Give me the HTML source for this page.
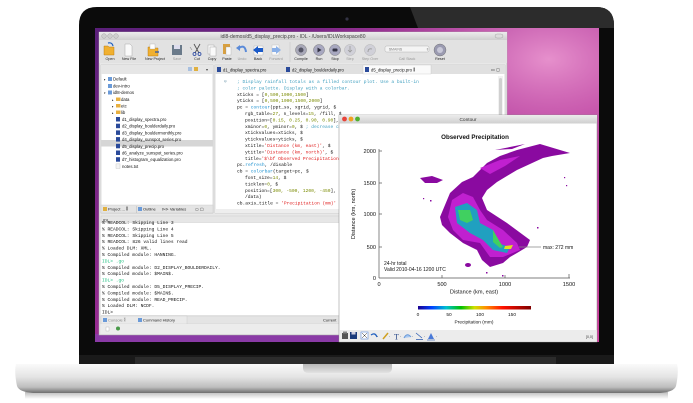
<!DOCTYPE html>
<html><head><meta charset="utf-8"><style>
html,body{margin:0;padding:0;background:#fff;width:693px;height:403px;overflow:hidden}
svg{display:block}
.s{font-family:"Liberation Sans",sans-serif}
.m{font-family:"Liberation Mono",monospace;font-size:4.6px}
</style></head><body>
<svg width="693" height="403" viewBox="0 0 693 403" xmlns="http://www.w3.org/2000/svg">
<defs>
<linearGradient id="base" x1="0" y1="0" x2="0" y2="1">
<stop offset="0" stop-color="#fafafa"/><stop offset="0.45" stop-color="#e4e4e4"/><stop offset="0.8" stop-color="#bdbdbd"/><stop offset="1" stop-color="#6e6e6e"/></linearGradient>
<linearGradient id="notch" x1="0" y1="0" x2="0" y2="1"><stop offset="0" stop-color="#b8b8b8"/><stop offset="1" stop-color="#e2e2e2"/></linearGradient>
<linearGradient id="desk" x1="0" y1="0" x2="1" y2="1"><stop offset="0" stop-color="#5a1f7a"/><stop offset="0.5" stop-color="#9a2c92"/><stop offset="1" stop-color="#d0409e"/></linearGradient>
<radialGradient id="glow" cx="0.9" cy="0.1" r="0.5"><stop offset="0" stop-color="#e690cc"/><stop offset="1" stop-color="#c8389e" stop-opacity="0"/></radialGradient>
<linearGradient id="tb" x1="0" y1="0" x2="0" y2="1"><stop offset="0" stop-color="#ececec"/><stop offset="1" stop-color="#cfcfcf"/></linearGradient>
<linearGradient id="cbar" x1="0" y1="0" x2="1" y2="0"><stop offset="0" stop-color="#1a0090"/><stop offset="0.12" stop-color="#0040ff"/><stop offset="0.25" stop-color="#00c0d0"/><stop offset="0.38" stop-color="#00c000"/><stop offset="0.5" stop-color="#d0e000"/><stop offset="0.6" stop-color="#ff9000"/><stop offset="0.75" stop-color="#ff1000"/><stop offset="1" stop-color="#800000"/></linearGradient>
<linearGradient id="shadow" x1="0" y1="0" x2="0" y2="1"><stop offset="0" stop-color="#bbb"/><stop offset="1" stop-color="#fff"/></linearGradient>
</defs>

<!-- base shadow -->
<rect x="25" y="392" width="643" height="7" fill="url(#shadow)"/>
<!-- lid -->
<path d="M97 7 H596 Q614 7 614 25 V365 H79 V25 Q79 7 97 7 Z" fill="#0b0b0b"/>
<path d="M410 7 H596 Q614 7 614 25 V28 H418 Z" fill="#2c2c2c"/>
<circle cx="347" cy="19" r="1.6" fill="#334"/>
<!-- hinge -->
<rect x="79" y="355" width="535" height="9" fill="#1a1a1a"/>
<rect x="135" y="357" width="421" height="7" fill="#2c2c2c"/>
<!-- base -->
<path d="M16 364 H677 Q679 372 676 386 Q674 392 660 393 H33 Q19 392 17 386 Q14 372 16 364 Z" fill="url(#base)"/>
<path d="M303 364 H392 V368 Q392 373 386 373 H309 Q303 373 303 368 Z" fill="url(#notch)"/>

<!-- screen -->
<rect x="95" y="28" width="504" height="314" fill="url(#desk)"/>
<rect x="95" y="28" width="504" height="314" fill="url(#glow)"/>
<rect x="95" y="334" width="250" height="8" fill="#8a3aa6"/>

<!-- IDL window -->
<rect x="99" y="32" width="408" height="303" fill="#e8e8e8" stroke="#aaa" stroke-width="0.5"/>
<rect x="99" y="32" width="408" height="8" fill="url(#tb)"/>
<circle cx="104" cy="36" r="2.3" fill="#cfcfcf" stroke="#999" stroke-width="0.4"/>
<circle cx="110" cy="36" r="2.3" fill="#cfcfcf" stroke="#999" stroke-width="0.4"/>
<circle cx="116" cy="36" r="2.3" fill="#cfcfcf" stroke="#999" stroke-width="0.4"/>
<rect x="495" y="34" width="8" height="4" rx="2" fill="#ddd" stroke="#999" stroke-width="0.4"/>
<text x="293" y="38" class="s" font-size="5" fill="#444" text-anchor="middle">idl8-demos/d5_display_precip.pro - IDL - /Users/IDLWorkspace80</text>
<rect x="99" y="40" width="408" height="23" fill="#e2e2e2"/>
<!-- toolbar icons -->
<g>
<path d="M104 46 h4 l1 1 h5 v8 h-10 z" fill="#f0b030" stroke="#b07000" stroke-width="0.4"/><path d="M108 43 q4 -1 5 3" stroke="#2060c0" stroke-width="1.2" fill="none"/>
<path d="M125 44 h5 l2 2 v10 h-7 z" fill="#fafafa" stroke="#999" stroke-width="0.4"/>
<path d="M148 47 h4 l1 1 h5 v8 h-10 z" fill="#f0b030" stroke="#b07000" stroke-width="0.4"/><rect x="150" y="44" width="5" height="5" fill="#fff" stroke="#999" stroke-width="0.3"/><path d="M155 52 h4" stroke="#2050b0" stroke-width="1.2"/>
<rect x="172" y="45" width="10" height="10" fill="#6a7a8a"/><rect x="174" y="45" width="6" height="4" fill="#dde"/>
<line x1="190" y1="47" x2="192" y2="50" stroke="#555" stroke-width="0.4"/>
<path d="M194 44 l5 9 M200 44 l-5 9" stroke="#555" stroke-width="0.9"/><circle cx="194.5" cy="54" r="1.5" fill="none" stroke="#2040a0" stroke-width="0.8"/><circle cx="199.5" cy="54" r="1.5" fill="none" stroke="#2040a0" stroke-width="0.8"/>
<rect x="208" y="45" width="6" height="9" fill="#fafafa" stroke="#999" stroke-width="0.4"/><rect x="210" y="47" width="6" height="9" fill="#fafafa" stroke="#999" stroke-width="0.4"/>
<rect x="223" y="44" width="7" height="10" fill="#d8a040"/><rect x="226" y="47" width="5" height="8" fill="#fafafa" stroke="#999" stroke-width="0.3"/>
<path d="M239 48 q6 -4 7 4" stroke="#5a8ad8" stroke-width="2" fill="none"/><path d="M236 48 l4 -3 v6 z" fill="#5a8ad8"/>
<rect x="254" y="46" width="9" height="9" fill="#fafafa" stroke="#999" stroke-width="0.3"/><path d="M253 50 l5 -4 v2 h5 v4 h-5 v2 z" fill="#1a5ac8"/>
<rect x="272" y="45" width="7" height="10" fill="#fafafa" stroke="#aaa" stroke-width="0.3"/><path d="M281 50 l-5 -4 v2 h-4 v4 h4 v2 z" fill="#8ab0e8"/>
<line x1="290" y1="42" x2="290" y2="62" stroke="#bbb" stroke-width="0.4"/>
<circle cx="301" cy="50" r="5.5" fill="#a8a8b8" stroke="#666" stroke-width="0.4"/><circle cx="301" cy="50" r="2.5" fill="#556"/>
<circle cx="319" cy="50" r="5.5" fill="#a8a8c0" stroke="#666" stroke-width="0.4"/><path d="M317.5 47.5 l4 2.5 -4 2.5 z" fill="#334"/>
<circle cx="335" cy="50" r="5.5" fill="#a8a8c0" stroke="#666" stroke-width="0.4"/><rect x="332.5" y="48.5" width="5" height="3" rx="1" fill="#334"/>
<circle cx="350" cy="50" r="5.5" fill="#d0d0d8" stroke="#aaa" stroke-width="0.4"/><path d="M350 46 v6 m-2 -2 l2 2 2 -2" stroke="#999" stroke-width="0.8" fill="none"/>
<circle cx="370" cy="50" r="5.5" fill="#d0d0d8" stroke="#aaa" stroke-width="0.4"/><path d="M368 52 q0 -4 4 -3" stroke="#999" stroke-width="0.8" fill="none"/>
<rect x="385" y="46" width="44" height="6" rx="1.5" fill="#f4f4f4" stroke="#aaa" stroke-width="0.4"/>
<text x="389" y="50.5" class="s" font-size="3.6" fill="#888">$MAIN$</text>
<text x="426" y="50.5" class="s" font-size="3.6" fill="#888">⇕</text>
<circle cx="440" cy="50" r="6" fill="#9a9ab0" stroke="#666" stroke-width="0.4"/><circle cx="440" cy="50" r="3" fill="#c8c8d8"/>
</g>
<g class="s" font-size="3.7" fill="#222" text-anchor="middle">
<text x="110" y="60">Open</text><text x="129" y="60">New File</text><text x="155" y="60">New Project</text><text x="177" y="60" fill="#999">Save</text>
<text x="197" y="60">Cut</text><text x="212" y="60">Copy</text><text x="227" y="60">Paste</text><text x="242" y="60" fill="#999">Undo</text><text x="258" y="60">Back</text><text x="276" y="60" fill="#999">Forward</text>
<text x="301" y="60">Compile</text><text x="319" y="60">Run</text><text x="335" y="60">Stop</text><text x="350" y="60" fill="#999">Step</text><text x="370" y="60" fill="#999">Step Over</text><text x="407" y="60" fill="#999">Call Stack</text><text x="440" y="60">Reset</text>
</g>

<!-- left panel -->
<rect x="101" y="65" width="112" height="148" fill="#fff" stroke="#aaa" stroke-width="0.4"/>
<rect x="101" y="65" width="112" height="9" fill="#e6e6e6"/>
<rect x="188" y="67" width="4" height="4" fill="#a8c0e0"/><rect x="194" y="67" width="4" height="4" fill="#e0b040"/><text x="206" y="71" class="s" font-size="4" fill="#444">▾</text>
<rect x="101" y="140" width="112" height="6.5" fill="#d6d6d6"/>
<g class="s" font-size="4.3" fill="#111">
<text x="104" y="80.5" font-size="3">▸</text><rect x="108" y="77" width="4" height="4" fill="#6a9ad8"/><text x="113" y="80.5">Default</text>
<rect x="108" y="84" width="4" height="4" fill="#6a9ad8"/><text x="113" y="87.5">dev-intro</text>
<text x="104" y="94" font-size="3">▾</text><rect x="108" y="90.5" width="4" height="4" fill="#6a9ad8"/><text x="113" y="94">idl8-demos</text>
<text x="112" y="101" font-size="3">▸</text><rect x="116" y="97.5" width="4.5" height="3.5" fill="#e8b040"/><text x="121" y="101">data</text>
<text x="112" y="107.5" font-size="3">▸</text><rect x="116" y="104" width="4.5" height="3.5" fill="#e8b040"/><text x="121" y="107.5">etc</text>
<text x="112" y="114" font-size="3">▸</text><rect x="116" y="110.5" width="4.5" height="3.5" fill="#e8b040"/><text x="121" y="114">lib</text>
<g fill="#2a4a9a"><rect x="116" y="117" width="4" height="4.5"/><rect x="116" y="123.7" width="4" height="4.5"/><rect x="116" y="130.4" width="4" height="4.5"/><rect x="116" y="137.1" width="4" height="4.5"/><rect x="116" y="143.8" width="4" height="4.5"/><rect x="116" y="150.5" width="4" height="4.5"/><rect x="116" y="157.2" width="4" height="4.5"/></g>
<rect x="116" y="163.9" width="4" height="4.5" fill="#f4f4f4" stroke="#aaa" stroke-width="0.3"/>
<text x="122" y="121">d1_display_spectra.pro</text>
<text x="122" y="127.7">d2_display_boulderdaily.pro</text>
<text x="122" y="134.4">d3_display_bouldermonthly.pro</text>
<text x="122" y="141.1">d4_display_sunspot_series.pro</text>
<text x="122" y="147.8">d5_display_precip.pro</text>
<text x="122" y="154.5">d6_analyze_sunspot_series.pro</text>
<text x="122" y="161.2">d7_histogram_equalization.pro</text>
<text x="122" y="167.9">notes.txt</text>
</g>
<rect x="101" y="205" width="112" height="8" fill="#e4e4e4" stroke="#bbb" stroke-width="0.3"/>
<g class="s" font-size="4" fill="#222"><rect x="103" y="207" width="4" height="4" fill="#e0b040"/><text x="108" y="210.5">Project ... ⁑</text><rect x="136" y="206" width="0.4" height="7" fill="#aaa"/><rect x="138" y="207" width="4" height="4" fill="#6a9ad8"/><text x="143" y="210.5">Outline</text><text x="162" y="210.5">⊳⊳ Variables</text><text x="195" y="210.5">▭ ▢</text></g>

<!-- editor -->
<rect x="215" y="65" width="290" height="148" fill="#fff" stroke="#aaa" stroke-width="0.4"/>
<rect x="215" y="65" width="290" height="9" fill="#e0e0e0"/>
<rect x="363" y="65" width="68" height="9" fill="#fafafa" stroke="#bbb" stroke-width="0.3"/>
<g class="s" font-size="4.2" fill="#111">
<rect x="217" y="67" width="4" height="5" fill="#2a4a9a"/><text x="223" y="71.5">d1_display_spectra.pro</text>
<rect x="286" y="67" width="4" height="5" fill="#2a4a9a"/><text x="292" y="71.5">d2_display_boulderdaily.pro</text>
<rect x="365" y="67" width="4" height="5" fill="#2a4a9a"/><text x="371" y="71.5">d5_display_precip.pro ⁑</text>
<text x="491" y="71">▭ ▢</text>
</g>
<rect x="498" y="76" width="5" height="135" fill="#f2f2f2"/><rect x="499" y="78" width="3" height="40" rx="1.5" fill="#d0d0d0"/>
<rect x="215" y="209" width="280" height="4" fill="#eee"/>
<text x="224" y="82.5" class="m" fill="#8ab">⊖</text>
<g class="m" fill="#111">
<text x="237" y="83" fill="#3f9fbf">; Display rainfall totals as a filled contour plot. Use a built-in</text>
<text x="237" y="89.4" fill="#3f9fbf">; color palette. Display with a colorbar.</text>
<text x="237" y="95.8">xticks = [<tspan fill="#7a8a00">0,500,1000,1500</tspan>]</text>
<text x="237" y="102.2">yticks = [<tspan fill="#7a8a00">0,500,1000,1500,2000</tspan>]</text>
<text x="237" y="108.6">pc = <tspan fill="#1a90d0">contour</tspan>(ppt_ss, xgrid, ygrid, $</text>
<text x="245" y="115">rgb_table=<tspan fill="#7a8a00">27</tspan>, n_levels=<tspan fill="#7a8a00">15</tspan>, /fill, $</text>
<text x="245" y="121.4">position=[<tspan fill="#7a8a00">0.15, 0.25, 0.90, 0.90</tspan>], $</text>
<text x="245" y="127.8">xminor=<tspan fill="#7a8a00">0</tspan>, yminor=<tspan fill="#7a8a00">0</tspan>, $ <tspan fill="#3f9fbf">; decrease c</tspan></text>
<text x="245" y="134.2">xtickvalues=xticks, $</text>
<text x="245" y="140.6">ytickvalues=yticks, $</text>
<text x="245" y="147">xtitle=<tspan fill="#e02020">'Distance (km, east)'</tspan>, $</text>
<text x="245" y="153.4">ytitle=<tspan fill="#e02020">'Distance (km, north)'</tspan>, $</text>
<text x="245" y="159.8">title=<tspan fill="#e02020">'$\bf Observed Precipitation</tspan></text>
<text x="237" y="166.2">pc.<tspan fill="#1a90d0">refresh</tspan>, /disable</text>
<text x="237" y="172.6">cb = <tspan fill="#1a90d0">colorbar</tspan>(target=pc, $</text>
<text x="245" y="179">font_size=<tspan fill="#7a8a00">14</tspan>, $</text>
<text x="245" y="185.4">ticklen=<tspan fill="#7a8a00">0</tspan>, $</text>
<text x="245" y="191.8">position=[<tspan fill="#7a8a00">300, -500, 1200, -450</tspan>], $</text>
<text x="245" y="198.2">/data)</text>
<text x="237" y="204.6">cb.axis_title = <tspan fill="#e02020">'Precipitation (mm)'</tspan></text>
</g>

<!-- console -->
<rect x="101" y="216" width="404" height="7" fill="#e6e6e6" stroke="#bbb" stroke-width="0.3"/>
<text x="103" y="221.5" class="s" font-size="4" fill="#222">IDL</text>
<rect x="101" y="223" width="404" height="92" fill="#fff"/>
<g class="m" fill="#111">
<text x="102" y="224">% READCOL: Skipping Line 3</text>
<text x="102" y="230.4">% READCOL: Skipping Line 4</text>
<text x="102" y="236.8">% READCOL: Skipping Line 5</text>
<text x="102" y="243.2">% READCOL: 826 valid lines read</text>
<text x="102" y="249.6">% Loaded DLM: XML.</text>
<text x="102" y="256">% Compiled module: HANNING.</text>
<text x="102" y="262.4" fill="#20c080">IDL&gt; .go</text>
<text x="102" y="268.8">% Compiled module: D2_DISPLAY_BOULDERDAILY.</text>
<text x="102" y="275.2">% Compiled module: $MAIN$.</text>
<text x="102" y="281.6" fill="#20c080">IDL&gt; .go</text>
<text x="102" y="288">% Compiled module: D5_DISPLAY_PRECIP.</text>
<text x="102" y="294.4">% Compiled module: $MAIN$.</text>
<text x="102" y="300.8">% Compiled module: READ_PRECIP.</text>
<text x="102" y="307.2">% Loaded DLM: NCDF.</text>
<text x="102" y="313.6">IDL&gt;</text>
</g>
<rect x="101" y="316" width="404" height="8" fill="#e4e4e4" stroke="#bbb" stroke-width="0.3"/>
<rect x="101" y="316" width="86" height="8" fill="#eaeaea" stroke="#bbb" stroke-width="0.3"/>
<g class="s" font-size="4" fill="#222"><rect x="103" y="318" width="4" height="4" fill="#6a9ad8"/><text x="108" y="321.5" fill="#888">Console ⁑</text><rect x="138" y="318" width="4" height="4" fill="#6a9ad8"/><text x="143" y="321.5">Command History</text><text x="323" y="321.5">Current</text></g>
<rect x="101" y="324" width="404" height="10" fill="#ececec"/>
<rect x="106" y="327" width="3" height="4" fill="#fff" stroke="#999" stroke-width="0.3"/><circle cx="118" cy="328.5" r="2" fill="#4a9a4a"/>

<!-- Contour window -->
<rect x="339" y="115" width="258" height="227" fill="#fff" stroke="#888" stroke-width="0.5"/>
<rect x="339" y="115" width="258" height="8.5" fill="url(#tb)"/>
<circle cx="344.5" cy="119" r="2.4" fill="#e8443a"/><circle cx="351" cy="119" r="2.4" fill="#f0a020"/><circle cx="357.5" cy="119" r="2.4" fill="#50b030"/>
<text x="468" y="121.2" class="s" font-size="4.8" fill="#333" text-anchor="middle">Contour</text>
<text x="475" y="139" class="s" font-size="6.2" font-weight="bold" fill="#111" text-anchor="middle">Observed Precipitation</text>
<!-- data -->
<g>
<path d="M440 217 L450 193 L462 182 L473 177 L487 163 L500 156 L517 150 L540 144 L570 153 L552 156 L543 158 L517 170 L497 182 L487 190 L482 198 L487 210 L507 223 L530 240 L527 247 L517 253 L510 257 L503 263 L490 267 L482 260 L477 250 L463 243 L450 233 L442 225 Z" fill="#8a0aa0"/>
<path d="M495 150 L525 144 L512 149 Z M493 160 L520 152 L530 152 L505 160 Z" fill="#8a0aa0"/>
<path d="M420 178 L432 176 L443 180 L437 183 L425 183 Z" fill="#8a0aa0"/>
<ellipse cx="468" cy="265" rx="3" ry="2" fill="#8a0aa0"/>
<path d="M452 200 L463 193 L473 197 L480 210 L487 220 L503 230 L517 243 L520 250 L503 257 L490 257 L480 243 L463 240 L453 230 L448 217 Z" fill="#c020d0"/>
<path d="M480 168 L500 160 L520 156 L505 166 L490 174 Z" fill="#c020d0"/>
<path d="M455 207 L467 203 L477 210 L480 223 L493 230 L497 243 L510 247 L507 253 L493 250 L483 240 L470 233 L457 223 Z" fill="#20a0c0"/>
<path d="M458 210 L470 210 L473 220 L467 223 L460 220 Z" fill="#40d060"/>
<path d="M493 230 L497 237 L503 247 L500 248 L493 242 Z" fill="#40d060"/>
<path d="M505 246 L513 245 L511 249 L504 249 Z" fill="#e0e020"/>
<g fill="#8a0aa0"><rect x="430" y="200" width="1.5" height="1.5"/><rect x="564" y="177" width="1.2" height="1.2"/><rect x="566" y="185" width="1.2" height="1.2"/><rect x="537" y="227" width="1.5" height="1.5"/><rect x="502" y="275" width="1.5" height="1.5"/><rect x="486" y="272" width="1.5" height="1.5"/><rect x="423" y="198" width="1.2" height="1.2"/></g>
</g>
<!-- axes -->
<g stroke="#555" stroke-width="0.7" fill="none">
<line x1="379" y1="149" x2="379" y2="278"/><line x1="379" y1="278" x2="570" y2="278"/>
<line x1="379" y1="151" x2="382" y2="151"/><line x1="379" y1="183" x2="382" y2="183"/><line x1="379" y1="214" x2="382" y2="214"/><line x1="379" y1="247" x2="382" y2="247"/>
<line x1="442" y1="278" x2="442" y2="275"/><line x1="505" y1="278" x2="505" y2="275"/><line x1="569" y1="278" x2="569" y2="274"/>
<line x1="519" y1="247" x2="541" y2="247" stroke="#888"/>
</g>
<g class="s" font-size="5.6" fill="#111">
<g text-anchor="end"><text x="376" y="153">2000</text><text x="376" y="185">1500</text><text x="376" y="216">1000</text><text x="376" y="249">500</text><text x="376" y="280">0</text></g>
<g text-anchor="middle"><text x="379" y="286">0</text><text x="442" y="286">500</text><text x="505" y="286">1000</text><text x="569" y="286">1500</text>
<text x="474" y="293.5">Distance (km, east)</text></g>
<text transform="translate(355,214) rotate(-90)" text-anchor="middle">Distance (km, north)</text>
<text x="543" y="249" font-size="5">max: 272 mm</text>
<text x="384" y="265" font-size="5">24-hr total</text>
<text x="384" y="271" font-size="5">Valid 2010-04-16 1200 UTC</text>
</g>
<rect x="418" y="306" width="113" height="3.5" fill="url(#cbar)"/>
<g class="s" font-size="4.8" fill="#111" text-anchor="middle"><text x="418" y="316">0</text><text x="449" y="316">50</text><text x="480" y="316">100</text><text x="512" y="316">150</text><text x="474" y="323.5">Precipitation (mm)</text></g>
<rect x="339.3" y="330" width="257.5" height="11.7" fill="#ececec"/>
<g>
<rect x="342" y="333" width="6" height="6" fill="#555"/><rect x="343" y="331.5" width="4" height="2" fill="#888"/>
<rect x="350" y="332" width="7" height="7" fill="#1a3a7a"/><rect x="351.5" y="332" width="4" height="2.5" fill="#ccd"/>
<rect x="361" y="332" width="7" height="7" fill="#fff" stroke="#5a8ad8" stroke-width="0.6"/><path d="M362 333 l5 5 m0 -5 l-5 5" stroke="#333" stroke-width="0.5"/>
<path d="M371 335 q4 -3 6 2" stroke="#2060c0" stroke-width="1.3" fill="none"/><text x="377" y="338" class="s" font-size="4">·</text>
<path d="M383 339 l5 -6" stroke="#d0a020" stroke-width="1.5"/><text x="389" y="338" class="s" font-size="4">·</text>
<text x="394" y="339.5" font-family="Liberation Serif" font-size="8" fill="#2a4a8a">T</text><text x="400" y="338" class="s" font-size="4">·</text>
<path d="M404 338 q3 -6 7 -1" stroke="#6a9ad8" stroke-width="1" fill="#a8c8f0"/><text x="412" y="338" class="s" font-size="4">·</text>
<path d="M416 333 l6 5 M416 339.5 h7" stroke="#2a5ab0" stroke-width="0.7"/><text x="424" y="338" class="s" font-size="4">·</text>
<path d="M428 339 l3 -6 3 6 z" fill="#4a7ad8"/><path d="M427 340 h8" stroke="#2a5ab0" stroke-width="0.6"/><text x="436" y="338" class="s" font-size="4">·</text>
<text x="586" y="338" class="s" font-size="3.5" fill="#333">[0,0]</text>
</g>
</svg>
</body></html>
